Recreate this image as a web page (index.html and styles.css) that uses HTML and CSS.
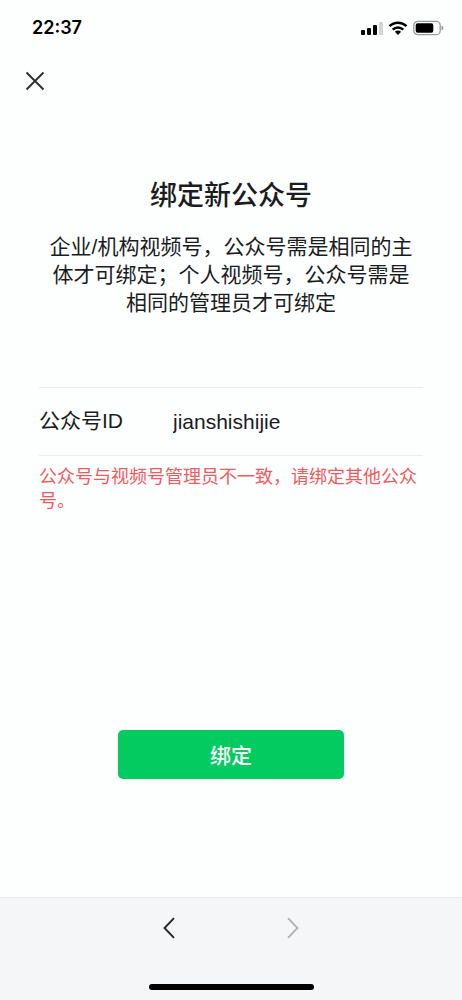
FILE: index.html
```
<!DOCTYPE html>
<html lang="zh-CN">
<head>
<meta charset="utf-8">
<meta name="viewport" content="width=device-width, initial-scale=1">
<title>绑定新公众号</title>
<link rel="stylesheet" href="styles.css">
</head>
<body>
<div class="screen">
  <header class="status">
    <time class="clock">22:37</time>
    <div class="indicators">
      <svg width="22" height="14" viewBox="0 0 22 14" role="img" aria-label="信号">
        <rect x="0" y="9" width="4" height="5" rx="1"/>
        <rect x="6" y="7" width="4" height="7" rx="1"/>
        <rect x="12" y="4" width="4" height="10" rx="1"/>
        <rect x="18" y="1" width="4" height="13" rx="1" fill="#d2d3d4"/>
      </svg>
      <svg width="20" height="14" viewBox="0 0 20 14" role="img" aria-label="Wi-Fi">
        <g fill="none" stroke="#000" stroke-width="2.5">
          <path d="M1.500 5.200C6.300.5 13.700.5 18.500 5.200"/>
          <path d="M4.700 8.600C7.700 5.700 12.300 5.700 15.300 8.600"/>
        </g>
        <path d="M10 14L6.900 10.800C8.700 9.200 11.300 9.200 13.100 10.800Z"/>
      </svg>
      <svg width="31" height="16" viewBox="0 0 31 16" role="img" aria-label="电池">
        <rect x=".8" y="1.300" width="26.400" height="13.400" rx="4" fill="none" stroke="#999b9c" stroke-width="1.300"/>
        <rect x="2.700" y="3.300" width="17.600" height="9.400" rx="2"/>
        <path d="M28.500 5.500Q30.500 6.200 30.500 8T28.500 10.500Z" fill="#999b9c"/>
      </svg>
    </div>
  </header>
  <nav class="topbar">
    <button class="icon-button" type="button" aria-label="关闭">
      <svg width="20" height="20" viewBox="0 0 20 20" fill="none" stroke="#2d2e30" stroke-width="1.900"><path d="M1.500 1.500L18.500 18.500M18.500 1.500L1.500 18.500"/></svg>
    </button>
  </nav>
  <main class="content">
    <h1 class="title">绑定新公众号</h1>
    <p class="description">企业/机构视频号，公众号需是相同的主体才可绑定；个人视频号，公众号需是相同的管理员才可绑定</p>
    <form class="form">
      <div class="field">
        <label class="label" for="account">公众号ID</label>
        <input class="input" id="account" type="text" value="jianshishijie" aria-describedby="error">
      </div>
      <p class="error" id="error">公众号与视频号管理员不一致，请绑定其他公众号。</p>
      <button class="submit" type="button">绑定</button>
    </form>
  </main>
  <footer class="toolbar">
    <div class="history">
      <button class="icon-button" type="button" aria-label="后退">
        <svg width="12" height="22" viewBox="0 0 12 22" fill="none" stroke="#222426" stroke-width="1.900"><path d="M11 1.200L1.500 11L11 20.800"/></svg>
      </button>
      <button class="icon-button" type="button" aria-label="前进" disabled>
        <svg width="12" height="22" viewBox="0 0 12 22" fill="none" stroke="#b1b3b5" stroke-width="1.900"><path d="M1 1.200L10.500 11L1 20.800"/></svg>
      </button>
    </div>
    <div class="home"></div>
  </footer>
</div>
</body>
</html>
```
FILE: styles.css
```
* {
  box-sizing: border-box;
}

body {
  margin: 0;
  background: #fdfefe;
  color: #1b1c1e;
  font-family: "Liberation Sans", "Noto Sans CJK SC", sans-serif;
}

h1,
p {
  margin: 0;
}

button,
input {
  font: inherit;
  color: inherit;
  border: 0;
  background: none;
  padding: 0;
}

svg {
  display: block;
}

.screen {
  display: flex;
  flex-direction: column;
  min-height: 100vh;
}

.status {
  display: flex;
  align-items: center;
  justify-content: space-between;
  height: 56px;
  padding: 0 18px 0 32px;
}

.clock {
  color: #000;
  font: 600 18px/24px Inter, sans-serif;
}

.indicators {
  display: flex;
  align-items: center;
  gap: 5px;
}

.topbar {
  display: flex;
  height: 50px;
  padding: 0 17px;
  align-items: center;
}

.icon-button {
  display: grid;
  place-items: center;
  width: 36px;
  height: 36px;
}

.content {
  flex: 1;
  padding: 70px 39px 0;
}

.title {
  font-size: 27px;
  font-weight: 500;
  line-height: 40px;
  text-align: center;
}

.description {
  margin-top: 17px;
  padding: 0 5px;
  font-size: 21px;
  line-height: 28px;
  text-align: center;
}

.form {
  display: flex;
  flex-direction: column;
  margin-top: 70px;
}

.field {
  display: flex;
  align-items: center;
  height: 69px;
  border-top: 1px solid #ebeced;
  border-bottom: 1px solid #ebeced;
  font-size: 21px;
}

.label {
  flex: 0 0 134px;
  line-height: 28px;
  padding-bottom: 2px;
}

.input {
  flex: 1;
  min-width: 0;
  height: 40px;
}

.error {
  margin-top: 9px;
  color: #ef5a5d;
  font-size: 18px;
  line-height: 24px;
}

.submit {
  align-self: center;
  width: 59%;
  height: 49px;
  margin: 217px 0 32px;
  padding-bottom: 2px;
  border-radius: 5px;
  background: #03cb5f;
  color: #fff;
  font-size: 21px;
  font-weight: 500;
}

.toolbar {
  display: flex;
  flex-direction: column;
  align-items: center;
  justify-content: space-between;
  height: 103px;
  padding: 12px 0 10px;
  border-top: 1px solid #e9eaec;
  background: #f5f6f8;
}

.history {
  display: flex;
  gap: 88px;
}

.home {
  width: 165px;
  height: 6px;
  border-radius: 3px;
  background: #000;
}
```
